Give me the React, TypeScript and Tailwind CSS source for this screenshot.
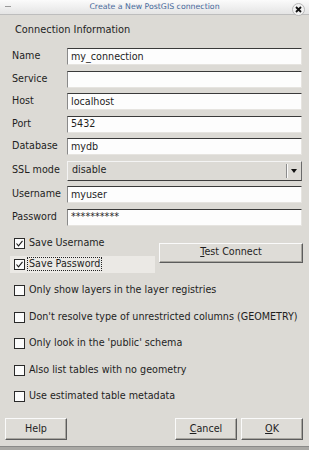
import React from 'react';

const fields: { label: string; value: string }[] = [
  { label: 'Name', value: 'my_connection' },
  { label: 'Service', value: '' },
  { label: 'Host', value: 'localhost' },
  { label: 'Port', value: '5432' },
  { label: 'Database', value: 'mydb' },
];

const options = [
  'Only show layers in the layer registries',
  "Don't resolve type of unrestricted columns (GEOMETRY)",
  "Only look in the 'public' schema",
  'Also list tables with no geometry',
  'Use estimated table metadata',
];

function CheckBox({ checked }: { checked?: boolean }) {
  return (
    <svg width="11" height="11" viewBox="0 0 11 11" className="shrink-0">
      <rect x="0.5" y="0.5" width="10" height="10" fill="#fbfbfb" stroke="#2a2a2a" />
      {checked && <path d="M2.5 5.5 L4.5 7.8 L8.5 2.8" fill="none" stroke="#1a1a1a" strokeWidth="1.1" />}
    </svg>
  );
}

function Entry({ value }: { value: string }) {
  return (
    <div className="h-[17px] flex-1 bg-[#fdfdfd] border-t border-l border-t-[#3a3a3a] border-l-[#8a8a8a] border-b border-r border-b-[#e6e4e0] border-r-[#e6e4e0] flex items-center pl-[3px] leading-none">
      {value}
    </div>
  );
}

function Button({ children, className }: { children: React.ReactNode; className?: string }) {
  return (
    <div
      className={`flex items-center justify-center bg-[#dedcd7] border border-t-[#fafafa] border-l-[#fafafa] border-b-[#5c5c5c] border-r-[#5c5c5c] shadow-[inset_-1px_-1px_0_#a8a6a0] ${className ?? ''}`}
    >
      {children}
    </div>
  );
}

export default function App() {
  return (
    <div className="w-[309px] h-[450px] bg-[#dcdad5] flex flex-col font-['DejaVu_Sans',sans-serif] text-[9.6px] text-[#1e1e1e] overflow-hidden">
      {/* Title bar */}
      <div className="relative h-[15px] shrink-0 bg-gradient-to-b from-[#fbfbfb] to-[#e4e4e4] border-b border-[#bdbdbd] flex items-center justify-center">
        <div className="absolute left-[5px] top-[6px] w-[6px] h-px bg-[#9a9a9a]" />
        <span className="text-[7.8px] text-[#45689a] leading-none">Create a New PostGIS connection</span>
        <div className="absolute right-[4px] top-[3px] w-[13px] h-[13px] rounded-full bg-[#f2f2f2] border border-[#b8b8b8] flex items-center justify-center">
          <svg width="7" height="7" viewBox="0 0 7 7">
            <path d="M1 1 L6 6 M6 1 L1 6" stroke="#111" strokeWidth="1.8" />
          </svg>
        </div>
      </div>

      <div className="pl-[15px] mt-[9px] h-[12px] leading-[12px] text-[9.8px]">Connection Information</div>

      {/* Form */}
      <div className="mt-[12px] pl-[12px] pr-[7px] flex flex-col gap-[5.5px]">
        {fields.map((f) => (
          <div key={f.label} className="flex items-center">
            <span className="w-[55px] shrink-0">{f.label}</span>
            <Entry value={f.value} />
          </div>
        ))}
        <div className="flex items-center">
          <span className="w-[55px] shrink-0">SSL mode</span>
          <div className="h-[20px] flex-1 bg-[#dcdad5] border-t border-l border-t-[#f4f4f4] border-l-[#f4f4f4] border-b border-r border-b-[#3c3c3c] border-r-[#6a6a6a] flex items-center">
            <span className="flex-1 pl-[4px]">disable</span>
            <div className="w-px h-[14px] bg-[#8c8c8c] shadow-[1px_0_0_#fafafa]" />
            <svg width="14" height="8" viewBox="0 0 14 8">
              <path d="M4 2 L10 2 L7 6 Z" fill="#111" />
            </svg>
          </div>
        </div>
        <div className="flex items-center">
          <span className="w-[55px] shrink-0">Username</span>
          <Entry value="myuser" />
        </div>
        <div className="flex items-center">
          <span className="w-[55px] shrink-0">Password</span>
          <Entry value="**********" />
        </div>
      </div>

      {/* Save checkboxes + Test Connect */}
      <div className="mt-[9px] flex pr-[6px]">
        <div className="w-[155px] flex flex-col gap-[4px]">
          <div className="h-[17px] pl-[14px] flex items-center gap-[4px]">
            <CheckBox checked />
            <span>Save Username</span>
          </div>
          <div className="h-[17px] ml-[10px] pl-[4px] bg-[#ebe9e5] flex items-center gap-[3px]">
            <CheckBox checked />
            <span className="outline outline-1 outline-dotted outline-[#222] px-px leading-[12px]">Save Password</span>
          </div>
        </div>
        <Button className="ml-[4px] mt-[8px] h-[20px] flex-1">
          <span>
            <span className="underline">T</span>est Connect
          </span>
        </Button>
      </div>

      {/* Options */}
      <div className="mt-[9.5px] flex flex-col gap-[9.5px]">
        {options.map((o) => (
          <div key={o} className="h-[17px] pl-[14px] flex items-center gap-[4px]">
            <CheckBox />
            <span>{o}</span>
          </div>
        ))}
      </div>

      {/* Bottom buttons */}
      <div className="mt-[13px] flex items-center pl-[5px] pr-[6px]">
        <Button className="w-[62px] h-[22px]">Help</Button>
        <div className="flex-1" />
        <Button className="w-[62px] h-[22px]">
          <span>
            <span className="underline">C</span>ancel
          </span>
        </Button>
        <Button className="ml-[4px] w-[62px] h-[22px]">
          <span>
            <span className="underline">O</span>K
          </span>
        </Button>
      </div>

      <div className="mt-auto h-[4px] bg-[#a9a8a4] border-t border-[#8a8a88]" />
    </div>
  );
}
